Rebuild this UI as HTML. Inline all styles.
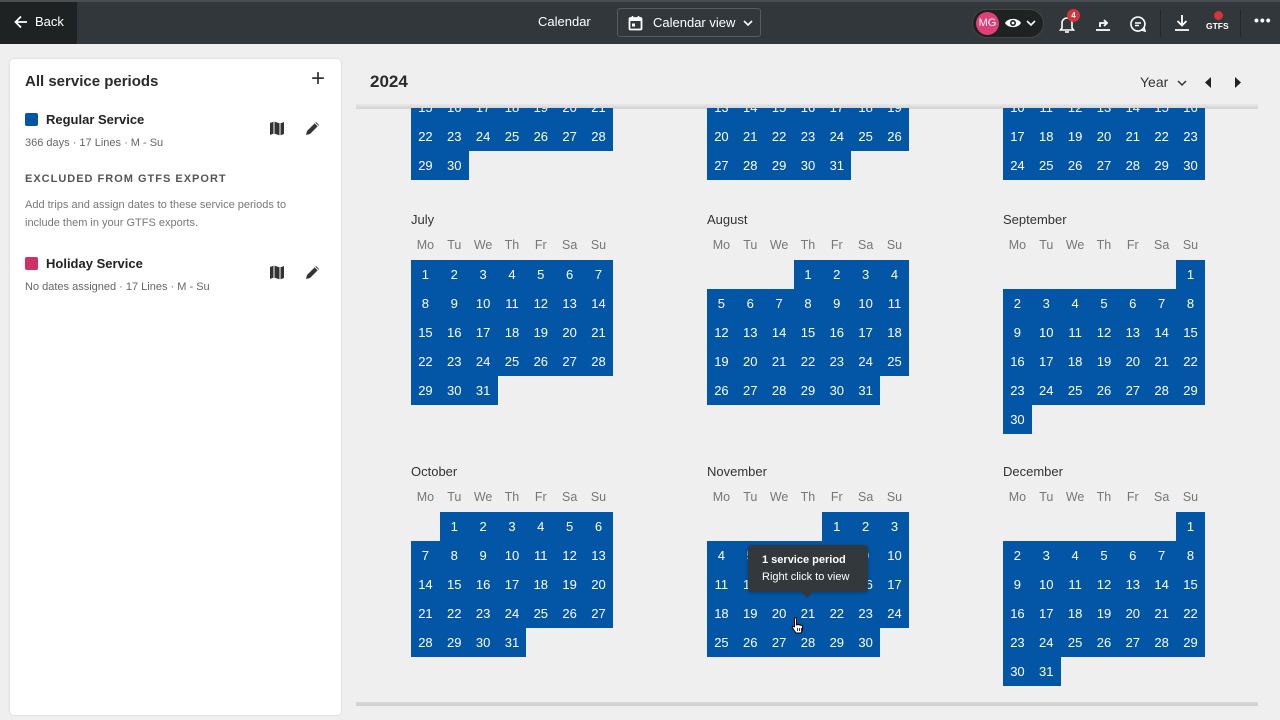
<!DOCTYPE html>
<html><head><meta charset="utf-8">
<style>
*{box-sizing:border-box;margin:0;padding:0}
body{width:1280px;height:720px;overflow:hidden;background:#efefef;font-family:"Liberation Sans",sans-serif;position:relative;color:#2b2b2b}
.top{position:absolute;left:0;top:0;width:1280px;height:44px;background:#32373b;border-top:2px solid #4a4f53}
.back{position:absolute;left:0;top:0;width:77px;height:42px;background:#1e2223;color:#fff;font-size:13px;line-height:40px;padding-left:35px}
.panel{position:absolute;left:10px;top:59px;width:331px;height:656px;background:#fff;border-radius:4px;box-shadow:0 0 2px rgba(0,0,0,.15)}
.clip{position:absolute;left:356px;top:108px;width:910px;height:594px;overflow:hidden}
.inner{position:absolute;left:-356px;top:-108px;width:1280px;height:720px}
.m{position:absolute;width:202px}
.lbl{position:absolute;top:-49px;left:0;font-size:13px;line-height:18px;color:#333;width:120px}
.hd{position:absolute;top:-24px;left:0;width:202px;display:grid;grid-template-columns:repeat(7,28.85px);font-size:12.5px;line-height:18px;color:#777;text-align:center}
.g{position:absolute;top:0;left:0;width:202px;display:grid;grid-template-columns:repeat(7,28.85px);grid-auto-rows:29px}
.g i{font-style:normal;background:#0356a6;color:#fff;font-size:13px;text-align:center;line-height:29px}
.ic{position:absolute}
</style></head><body>
<div class="top">
 <div class="back"><svg class="ic" style="left:13px;top:12px" width="16" height="16" viewBox="0 0 16 16"><path d="M14 8H3M8 2.5L2.5 8 8 13.5" stroke="#fff" stroke-width="1.8" fill="none"/></svg>Back</div>
 <div style="position:absolute;left:538px;top:0;line-height:40px;color:#fff;font-size:13px">Calendar</div>
 <div style="position:absolute;left:617px;top:6px;width:144px;height:29px;border:1px solid #565b5f;border-radius:3px;color:#fff;font-size:13px;line-height:27px;padding-left:35px">Calendar view
  <svg class="ic" style="left:10px;top:6px" width="15" height="16" viewBox="0 0 15 16"><rect x="1.5" y="3" width="12" height="11.5" rx="1" stroke="#fff" stroke-width="1.8" fill="none"/><rect x="1.5" y="3" width="12" height="3" fill="#fff"/><path d="M4.5 1v3M10.5 1v3" stroke="#fff" stroke-width="1.6"/><rect x="4" y="8.5" width="3" height="3" fill="#fff"/></svg>
  <svg class="ic" style="left:125px;top:11px" width="10" height="7" viewBox="0 0 10 7"><path d="M1 1l4 4 4-4" stroke="#fff" stroke-width="1.6" fill="none"/></svg></div>
 <div style="position:absolute;left:972px;top:7px;width:72px;height:29px;border-radius:15px;background:#1e2223;border:1px solid #444"></div>
 <div style="position:absolute;left:976px;top:10px;width:23px;height:23px;border-radius:50%;background:#e0407a;color:#fff;font-size:11px;line-height:23px;text-align:center">MG</div>
 <svg class="ic" style="left:1004px;top:15px" width="18" height="12" viewBox="0 0 18 12"><path d="M1 6C4 0.5 14 0.5 17 6 14 11.5 4 11.5 1 6Z" fill="#fff"/><circle cx="9" cy="6" r="3" fill="#1e2223"/><circle cx="9" cy="6" r="1.4" fill="#fff"/></svg>
 <svg class="ic" style="left:1026px;top:18px" width="10" height="7" viewBox="0 0 10 7"><path d="M1 1l4 4 4-4" stroke="#fff" stroke-width="1.6" fill="none"/></svg>
 <svg class="ic" style="left:1058px;top:12px" width="18" height="20" viewBox="0 0 18 20"><path d="M4 14V9a5 5 0 0110 0v5l1.5 2h-13z" stroke="#fff" stroke-width="1.6" fill="none"/><path d="M7 18h4" stroke="#fff" stroke-width="1.6"/></svg>
 <div style="position:absolute;left:1067px;top:7px;width:13px;height:13px;border-radius:50%;background:#d6333c;color:#fff;font-size:8px;line-height:13px;text-align:center;font-weight:bold">4</div>
 <svg class="ic" style="left:1094px;top:13px" width="18" height="17" viewBox="0 0 18 17"><path d="M2 15h14" stroke="#fff" stroke-width="1.8"/><path d="M6 12V8h7M10 5l3 3-3 3" stroke="#fff" stroke-width="1.8" fill="none"/></svg>
 <svg class="ic" style="left:1129px;top:13px" width="18" height="18" viewBox="0 0 18 18"><path d="M9 2a7 7 0 106 10.5L16 16l-3.5-1A7 7 0 009 2z" stroke="#fff" stroke-width="1.6" fill="none"/><path d="M6 8h6M6 10.5h4" stroke="#fff" stroke-width="1.4"/></svg>
 <div style="position:absolute;left:1160px;top:8px;width:1px;height:27px;background:#23272a"></div>
 <svg class="ic" style="left:1174px;top:12px" width="16" height="18" viewBox="0 0 16 18"><path d="M8 1v10M3.5 7L8 11.5 12.5 7M1 16h14" stroke="#fff" stroke-width="1.8" fill="none"/></svg>
 <div style="position:absolute;left:1214px;top:9px;width:9px;height:9px;border-radius:50%;background:#d6333c"></div>
 <div style="position:absolute;left:1206px;top:19px;color:#fff;font-size:8.5px;font-weight:bold">GTFS</div>
 <div style="position:absolute;left:1240px;top:8px;width:1px;height:27px;background:#23272a"></div>
 <div style="position:absolute;left:1254px;top:10px;color:#fff;font-size:14px;font-weight:bold;letter-spacing:1px">•••</div>
</div>

<div class="panel">
 <div style="position:absolute;left:15px;top:14px;font-size:15px;font-weight:bold;color:#2b2b2b">All service periods</div>
 <div style="position:absolute;left:301px;top:6px;font-size:24px;color:#333;font-weight:300">+</div>
 <div style="position:absolute;left:15px;top:54px;width:13px;height:13px;background:#0356a6;border-radius:2px"></div>
 <div style="position:absolute;left:36px;top:53px;font-size:13px;font-weight:bold;color:#222">Regular Service</div>
 <div style="position:absolute;left:15px;top:78px;font-size:11px;color:#666">366 days · 17 Lines · M - Su</div>
 <div style="position:absolute;left:15px;top:114px;font-size:11px;font-weight:bold;color:#555;letter-spacing:1px">EXCLUDED FROM GTFS EXPORT</div>
 <div style="position:absolute;left:15px;top:137px;font-size:11px;color:#777;line-height:18px;width:290px">Add trips and assign dates to these service periods to include them in your GTFS exports.</div>
 <div style="position:absolute;left:15px;top:198px;width:13px;height:13px;background:#d03068;border-radius:2px"></div>
 <div style="position:absolute;left:36px;top:197px;font-size:13px;font-weight:bold;color:#222">Holiday Service</div>
 <div style="position:absolute;left:15px;top:222px;font-size:11px;color:#666">No dates assigned · 17 Lines · M - Su</div>
 <svg class="ic" style="left:259px;top:62px" width="16" height="15" viewBox="0 0 16 15"><path d="M1 2l4-1.5 6 2 4-1.5v12l-4 1.5-6-2-4 1.5z" fill="#333"/><path d="M5 .5v12M11 2.5v12" stroke="#fff" stroke-width="1"/></svg>
 <svg class="ic" style="left:295px;top:61px" width="16" height="16" viewBox="0 0 16 16"><path d="M1 15l1-4 9-9 3 3-9 9z" fill="#333"/><path d="M10 3l3 3" stroke="#fff" stroke-width="1"/></svg>
 <svg class="ic" style="left:259px;top:206px" width="16" height="15" viewBox="0 0 16 15"><path d="M1 2l4-1.5 6 2 4-1.5v12l-4 1.5-6-2-4 1.5z" fill="#333"/><path d="M5 .5v12M11 2.5v12" stroke="#fff" stroke-width="1"/></svg>
 <svg class="ic" style="left:295px;top:205px" width="16" height="16" viewBox="0 0 16 16"><path d="M1 15l1-4 9-9 3 3-9 9z" fill="#333"/><path d="M10 3l3 3" stroke="#fff" stroke-width="1"/></svg>
</div>

<div style="position:absolute;left:370px;top:72px;font-size:17px;font-weight:bold;color:#2b2b2b">2024</div>
<div style="position:absolute;left:1140px;top:74px;font-size:14px;color:#333">Year</div>
<svg class="ic" style="left:1177px;top:80px" width="10" height="7" viewBox="0 0 10 7"><path d="M1 1l4 4 4-4" stroke="#333" stroke-width="1.5" fill="none"/></svg>
<svg class="ic" style="left:1204px;top:77px" width="8" height="11" viewBox="0 0 8 11"><path d="M7 0v11L1 5.5z" fill="#222"/></svg>
<svg class="ic" style="left:1234px;top:77px" width="8" height="11" viewBox="0 0 8 11"><path d="M1 0v11l6-5.5z" fill="#222"/></svg>

<div style="position:absolute;left:356px;top:104px;width:902px;height:5px;background:linear-gradient(#e8e8e8,#d2d2d2)"></div>
<div style="position:absolute;left:356px;top:702px;width:902px;height:4px;background:linear-gradient(#d8d8d8,#cfcfcf)"></div>

<div class="clip"><div class="inner">
<div class="m" style="left:411px;top:35px"><div class="g"><i>1</i><i>2</i><i>3</i><i>4</i><i>5</i><i>6</i><i>7</i><i>8</i><i>9</i><i>10</i><i>11</i><i>12</i><i>13</i><i>14</i><i>15</i><i>16</i><i>17</i><i>18</i><i>19</i><i>20</i><i>21</i><i>22</i><i>23</i><i>24</i><i>25</i><i>26</i><i>27</i><i>28</i><i>29</i><i>30</i></div></div>
<div class="m" style="left:707px;top:35px"><div class="g"><i style="grid-column-start:3">1</i><i>2</i><i>3</i><i>4</i><i>5</i><i>6</i><i>7</i><i>8</i><i>9</i><i>10</i><i>11</i><i>12</i><i>13</i><i>14</i><i>15</i><i>16</i><i>17</i><i>18</i><i>19</i><i>20</i><i>21</i><i>22</i><i>23</i><i>24</i><i>25</i><i>26</i><i>27</i><i>28</i><i>29</i><i>30</i><i>31</i></div></div>
<div class="m" style="left:1003px;top:35px"><div class="g"><i style="grid-column-start:6">1</i><i>2</i><i>3</i><i>4</i><i>5</i><i>6</i><i>7</i><i>8</i><i>9</i><i>10</i><i>11</i><i>12</i><i>13</i><i>14</i><i>15</i><i>16</i><i>17</i><i>18</i><i>19</i><i>20</i><i>21</i><i>22</i><i>23</i><i>24</i><i>25</i><i>26</i><i>27</i><i>28</i><i>29</i><i>30</i></div></div>
<div class="m" style="left:411px;top:260px"><div class="lbl">July</div><div class="hd"><span>Mo</span><span>Tu</span><span>We</span><span>Th</span><span>Fr</span><span>Sa</span><span>Su</span></div><div class="g"><i>1</i><i>2</i><i>3</i><i>4</i><i>5</i><i>6</i><i>7</i><i>8</i><i>9</i><i>10</i><i>11</i><i>12</i><i>13</i><i>14</i><i>15</i><i>16</i><i>17</i><i>18</i><i>19</i><i>20</i><i>21</i><i>22</i><i>23</i><i>24</i><i>25</i><i>26</i><i>27</i><i>28</i><i>29</i><i>30</i><i>31</i></div></div>
<div class="m" style="left:707px;top:260px"><div class="lbl">August</div><div class="hd"><span>Mo</span><span>Tu</span><span>We</span><span>Th</span><span>Fr</span><span>Sa</span><span>Su</span></div><div class="g"><i style="grid-column-start:4">1</i><i>2</i><i>3</i><i>4</i><i>5</i><i>6</i><i>7</i><i>8</i><i>9</i><i>10</i><i>11</i><i>12</i><i>13</i><i>14</i><i>15</i><i>16</i><i>17</i><i>18</i><i>19</i><i>20</i><i>21</i><i>22</i><i>23</i><i>24</i><i>25</i><i>26</i><i>27</i><i>28</i><i>29</i><i>30</i><i>31</i></div></div>
<div class="m" style="left:1003px;top:260px"><div class="lbl">September</div><div class="hd"><span>Mo</span><span>Tu</span><span>We</span><span>Th</span><span>Fr</span><span>Sa</span><span>Su</span></div><div class="g"><i style="grid-column-start:7">1</i><i>2</i><i>3</i><i>4</i><i>5</i><i>6</i><i>7</i><i>8</i><i>9</i><i>10</i><i>11</i><i>12</i><i>13</i><i>14</i><i>15</i><i>16</i><i>17</i><i>18</i><i>19</i><i>20</i><i>21</i><i>22</i><i>23</i><i>24</i><i>25</i><i>26</i><i>27</i><i>28</i><i>29</i><i>30</i></div></div>
<div class="m" style="left:411px;top:512px"><div class="lbl">October</div><div class="hd"><span>Mo</span><span>Tu</span><span>We</span><span>Th</span><span>Fr</span><span>Sa</span><span>Su</span></div><div class="g"><i style="grid-column-start:2">1</i><i>2</i><i>3</i><i>4</i><i>5</i><i>6</i><i>7</i><i>8</i><i>9</i><i>10</i><i>11</i><i>12</i><i>13</i><i>14</i><i>15</i><i>16</i><i>17</i><i>18</i><i>19</i><i>20</i><i>21</i><i>22</i><i>23</i><i>24</i><i>25</i><i>26</i><i>27</i><i>28</i><i>29</i><i>30</i><i>31</i></div></div>
<div class="m" style="left:707px;top:512px"><div class="lbl">November</div><div class="hd"><span>Mo</span><span>Tu</span><span>We</span><span>Th</span><span>Fr</span><span>Sa</span><span>Su</span></div><div class="g"><i style="grid-column-start:5">1</i><i>2</i><i>3</i><i>4</i><i>5</i><i>6</i><i>7</i><i>8</i><i>9</i><i>10</i><i>11</i><i>12</i><i>13</i><i>14</i><i>15</i><i>16</i><i>17</i><i>18</i><i>19</i><i>20</i><i>21</i><i>22</i><i>23</i><i>24</i><i>25</i><i>26</i><i>27</i><i>28</i><i>29</i><i>30</i></div></div>
<div class="m" style="left:1003px;top:512px"><div class="lbl">December</div><div class="hd"><span>Mo</span><span>Tu</span><span>We</span><span>Th</span><span>Fr</span><span>Sa</span><span>Su</span></div><div class="g"><i style="grid-column-start:7">1</i><i>2</i><i>3</i><i>4</i><i>5</i><i>6</i><i>7</i><i>8</i><i>9</i><i>10</i><i>11</i><i>12</i><i>13</i><i>14</i><i>15</i><i>16</i><i>17</i><i>18</i><i>19</i><i>20</i><i>21</i><i>22</i><i>23</i><i>24</i><i>25</i><i>26</i><i>27</i><i>28</i><i>29</i><i>30</i><i>31</i></div></div>
</div></div>

<div style="position:absolute;left:748px;top:545px;width:120px;height:47px;background:#33383c;border-radius:4px;box-shadow:0 1px 3px rgba(0,0,0,.3);color:#fff;font-size:11px;padding:7px 0 0 14px;line-height:16.5px"><b>1 service period</b><br>Right click to view</div>
<div style="position:absolute;left:801px;top:592px;width:0;height:0;border-left:6px solid transparent;border-right:6px solid transparent;border-top:6px solid #33383c"></div>
<svg class="ic" style="left:791px;top:616px" width="14" height="18" viewBox="0 0 14 18"><path d="M4 1.5c.8 0 1.5.6 1.5 1.4v6l1-.2c.6-.5 1.4-.3 1.7.3.6-.4 1.4-.2 1.7.4.7-.3 1.6.1 1.6 1V14l-1.5 3H5L1.5 12c-.5-.7-.2-1.6.6-1.7l1.4.6V2.9c0-.8.7-1.4.5-1.4z" fill="#fff" stroke="#000" stroke-width="1"/><path d="M6.5 12v3M8.5 12v3M10.5 12v3" stroke="#000" stroke-width=".8"/></svg>
</body></html>
